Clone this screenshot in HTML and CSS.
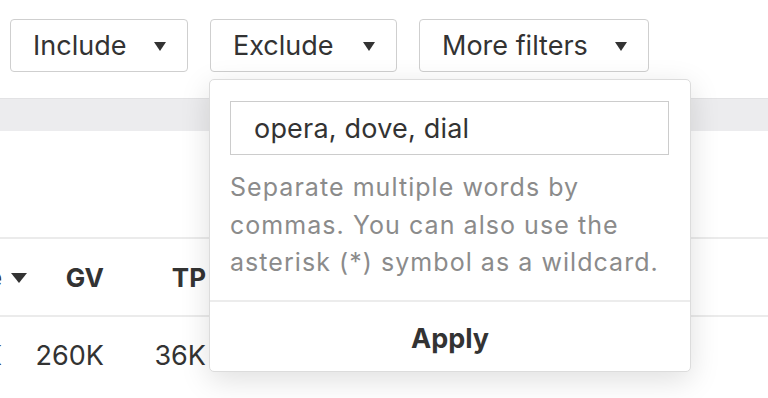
FILE: index.html
```html
<!DOCTYPE html>
<html>
<head>
<meta charset="utf-8">
<link rel="stylesheet" href="styles.css">
</head>
<body>
<div class="page">
  <div class="toolbar">
    <button class="btn btn-include">Include <span class="caret"></span></button>
    <button class="btn btn-exclude">Exclude <span class="caret"></span></button>
    <button class="btn btn-more">More filters <span class="caret"></span></button>
  </div>
  <div class="band"></div>
  <div class="spacer"></div>
  <div class="table">
    <div class="table-inner">
      <div class="row head">
        <div class="cell sorted">Volume</div>
        <div class="cell">GV</div>
        <div class="cell">TP</div>
        <div class="cell">KD</div>
      </div>
      <div class="row data">
        <div class="cell">1.2K</div>
        <div class="cell">260K</div>
        <div class="cell">36K</div>
        <div class="cell">12</div>
      </div>
    </div>
  </div>

  <div class="panel">
    <div class="panel-body">
      <div class="input">opera, dove, dial</div>
      <p class="hint">Separate multiple words by<br>commas. You can also use the<br>asterisk (*) symbol as a wildcard.</p>
    </div>
    <div class="panel-foot">Apply</div>
  </div>
</div>
</body>
</html>
```

FILE: styles.css
```css
* { box-sizing: border-box; }
html, body { margin: 0; padding: 0; background: #fff; }
body {
  font-family: Inter, "Liberation Sans", sans-serif;
  color: #333;
  width: 768px;
  height: 398px;
  overflow: hidden;
}
.page { position: relative; height: 398px; }

.toolbar {
  display: flex;
  gap: 22px;
  padding: 19px 0 0 10px;
  height: 72px;
}
.btn {
  height: 53px;
  border: 1px solid #cfcfcf;
  border-radius: 4px;
  background: #fff;
  color: #333;
  font-family: inherit;
  font-size: 27px;
  padding: 0 21px 0 22px;
  display: flex;
  align-items: center;
  justify-content: space-between;
  margin: 0;
}
.btn-include { width: 178px; }
.btn-exclude { width: 187px; }
.btn-more { width: 230px; }
.caret {
  width: 0; height: 0;
  border-left: 6.5px solid transparent;
  border-right: 6.5px solid transparent;
  border-top: 9px solid #333;
  margin-top: 1px;
}

.band {
  margin-top: 26px;
  height: 33px;
  background: #ececee;
  border-top: 1px solid #e2e2e4;
}
.spacer { height: 106px; }

.table { overflow: hidden; }
.table-inner { margin-left: -100px; }
.row {
  display: flex;
  border-top: 2px solid #ebebeb;
  align-items: center;
}
.row.head { height: 78px; font-weight: 700; font-size: 26px; color: #333; }
.row.data { height: 78px; font-size: 27px; color: #333; }
.cell {
  width: 102px;
  text-align: right;
  flex: none;
  position: relative;
}
.cell.sorted::after {
  content: "";
  position: absolute;
  right: -25px;
  top: 50%;
  margin-top: -4px;
  border-left: 8px solid transparent;
  border-right: 8px solid transparent;
  border-top: 10px solid #333;
}

.panel {
  position: absolute;
  left: 209px;
  top: 79px;
  width: 482px;
  height: 293px;
  background: #fff;
  border: 1px solid #dcdcdc;
  border-radius: 5px;
  box-shadow: 0 8px 30px rgba(0, 0, 0, 0.13);
  display: flex;
  flex-direction: column;
}
.panel-body {
  padding: 21px 21px 0 20px;
  height: 222px;
  border-bottom: 2px solid #ececec;
}
.input {
  height: 54px;
  border: 1px solid #cccccc;
  padding-left: 23px;
  display: flex;
  align-items: center;
  font-size: 27px;
  letter-spacing: 0.2px;
  color: #333;
}
.hint {
  margin: 14px 0 0 0;
  font-size: 25px;
  letter-spacing: 1.05px;
  line-height: 37.5px;
  color: #8b8b8b;
  white-space: nowrap;
}
.panel-foot {
  flex: 1;
  display: flex;
  align-items: center;
  justify-content: center;
  font-weight: 700;
  font-size: 27px;
  color: #333;
  padding-top: 4px;
}
```
